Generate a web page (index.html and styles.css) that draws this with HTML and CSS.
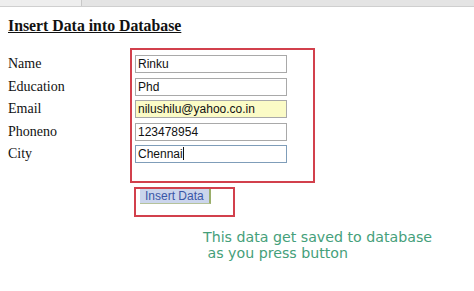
FILE: index.html
```html
<!DOCTYPE html>
<html lang="en">
<head>
    <meta charset="UTF-8">
    <title>Insert Data into Database</title>
    <link rel="stylesheet" href="styles.css">
</head>
<body>
    <div class="topbar">
        <div class="tab"></div>
    </div>
    <div class="page">
        <h1 class="title">Insert Data into Database</h1>
        <div class="form">
            <ul class="labels">
                <li>Name</li>
                <li>Education</li>
                <li>Email</li>
                <li>Phoneno</li>
                <li>City</li>
            </ul>
            <div class="fields">
                <div class="field">Rinku</div>
                <div class="field">Phd</div>
                <div class="field autofill">nilushilu@yahoo.co.in</div>
                <div class="field">123478954</div>
                <div class="field focus">Chennai<span class="caret"></span></div>
            </div>
        </div>
        <div class="submit-box">
            <button class="submit">Insert Data</button>
        </div>
        <p class="note">This data get saved to database<br>&nbsp;as you press button</p>
    </div>
</body>
</html>
```

FILE: styles.css
```css
* {
    margin: 0;
    padding: 0;
    box-sizing: border-box;
}

body {
    background: #fff;
    font-family: "Liberation Serif", "Times New Roman", serif;
    color: #111;
}

.topbar {
    height: 7px;
    background: #e4e4e4;
    border-bottom: 1px solid #cfcfcf;
    display: flex;
}

.tab {
    width: 82px;
    background: #eeeeee;
    border-right: 1px solid #c8c8c8;
}

.page {
    padding: 0 8px;
}

.title {
    font-size: 15.8px;
    font-weight: bold;
    text-decoration: underline;
    margin-top: 10px;
    line-height: 18px;
}

.form {
    display: flex;
    margin-top: 13px;
}

.labels {
    list-style: none;
    width: 122px;
    padding-top: 7px;
    display: flex;
    flex-direction: column;
    gap: 4.5px;
}

.labels li {
    height: 18px;
    line-height: 18px;
    font-size: 14px;
}

.fields {
    width: 185px;
    border: 2px solid #d2404c;
    padding: 5px 3px 18px;
    display: flex;
    flex-direction: column;
    gap: 4.5px;
}

.field {
    width: 152px;
    height: 18px;
    border: 1px solid #a9a9a9;
    font-family: "Liberation Sans", Arial, sans-serif;
    font-size: 12px;
    line-height: 16px;
    padding: 0 2px;
    color: #111;
}

.autofill {
    background: #fbfbc6;
}

.focus {
    border-color: #7f9db9;
}

.caret {
    display: inline-block;
    width: 1px;
    height: 13px;
    background: #111;
    vertical-align: -2px;
}

.submit-box {
    width: 101px;
    height: 30px;
    margin: 4px 0 0 126px;
    border: 2px solid #d2404c;
    padding: 0 0 0 4px;
}

.submit {
    display: block;
    height: 15px;
    padding: 0 5px;
    font-family: "Liberation Sans", Arial, sans-serif;
    font-size: 12px;
    line-height: 14px;
    color: #3a56a6;
    background: #cbd5ec;
    border: none;
    border-right: 2px solid #9aae6a;
    border-bottom: 1px solid #b5c29a;
}

.note {
    margin: 12px 0 0 195px;
    font-family: "DejaVu Sans", Verdana, sans-serif;
    font-size: 14.2px;
    line-height: 16px;
    color: #45a07a;
}
```
